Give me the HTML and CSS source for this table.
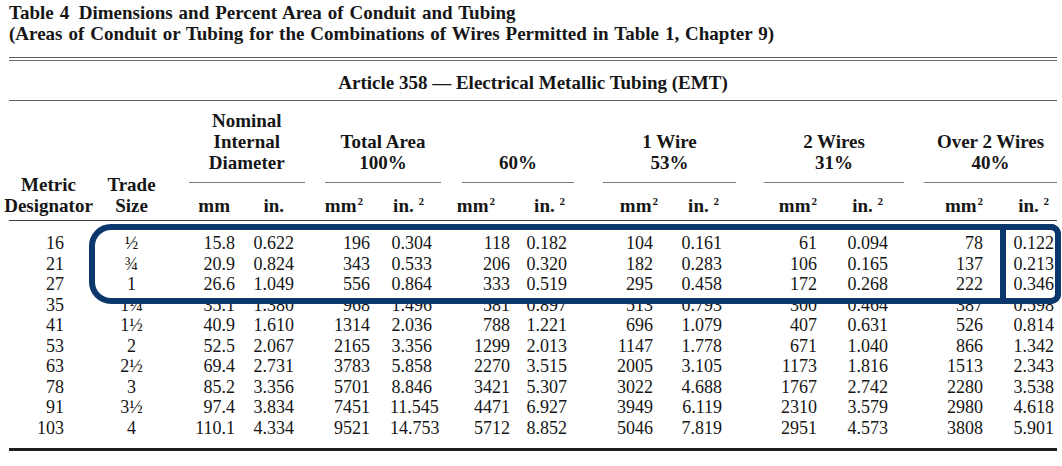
FILE: index.html
```html
<!DOCTYPE html>
<html lang="en">
<head>
<meta charset="utf-8">
<title>Table 4 — Electrical Metallic Tubing</title>
<link rel="stylesheet" href="styles.css">
</head>
<body>
<main class="page">
  <h1 class="title">Table 4&ensp;Dimensions and Percent Area of Conduit and Tubing<br>(Areas of Conduit or Tubing for the Combinations of Wires Permitted in Table 1, Chapter 9)</h1>
  <div class="rule-double"></div>
  <h2 class="article">Article 358 — Electrical Metallic Tubing (EMT)</h2>
  <table class="dims">
    <colgroup>
      <col class="w1"><col class="w2"><col class="w3"><col class="w4"><col class="w5"><col class="w6"><col class="w7">
      <col class="w8"><col class="w9"><col class="w10"><col class="w11"><col class="w12"><col class="w13"><col class="w14">
    </colgroup>
    <thead>
      <tr class="head-groups">
        <th rowspan="2" class="head-key"><div class="key-label">Metric<br>Designator</div></th>
        <th rowspan="2" class="head-key"><div class="key-label">Trade<br>Size</div></th>
        <th colspan="2"><div class="grp">Nominal<br>Internal<br>Diameter</div></th>
        <th colspan="2"><div class="grp">Total Area<br>100%</div></th>
        <th colspan="2"><div class="grp">60%</div></th>
        <th colspan="2"><div class="grp">1 Wire<br>53%</div></th>
        <th colspan="2"><div class="grp">2 Wires<br>31%</div></th>
        <th colspan="2"><div class="grp">Over 2 Wires<br>40%</div></th>
      </tr>
      <tr class="head-units">
        <th>mm</th><th>in.</th>
        <th>mm<sup>2</sup></th><th>in.&#8201;<sup>2</sup></th>
        <th>mm<sup>2</sup></th><th>in.&#8201;<sup>2</sup></th>
        <th>mm<sup>2</sup></th><th>in.&#8201;<sup>2</sup></th>
        <th>mm<sup>2</sup></th><th>in.&#8201;<sup>2</sup></th>
        <th>mm<sup>2</sup></th><th>in.&#8201;<sup>2</sup></th>
      </tr>
    </thead>
    <tbody>
      <tr><td>16</td><td>½</td><td>15.8</td><td>0.622</td><td>196</td><td>0.304</td><td>118</td><td>0.182</td><td>104</td><td>0.161</td><td>61</td><td>0.094</td><td>78</td><td>0.122</td></tr>
      <tr><td>21</td><td>¾</td><td>20.9</td><td>0.824</td><td>343</td><td>0.533</td><td>206</td><td>0.320</td><td>182</td><td>0.283</td><td>106</td><td>0.165</td><td>137</td><td>0.213</td></tr>
      <tr><td>27</td><td>1</td><td>26.6</td><td>1.049</td><td>556</td><td>0.864</td><td>333</td><td>0.519</td><td>295</td><td>0.458</td><td>172</td><td>0.268</td><td>222</td><td>0.346</td></tr>
      <tr><td>35</td><td>1¼</td><td>35.1</td><td>1.380</td><td>968</td><td>1.496</td><td>581</td><td>0.897</td><td>513</td><td>0.793</td><td>300</td><td>0.464</td><td>387</td><td>0.598</td></tr>
      <tr><td>41</td><td>1½</td><td>40.9</td><td>1.610</td><td>1314</td><td>2.036</td><td>788</td><td>1.221</td><td>696</td><td>1.079</td><td>407</td><td>0.631</td><td>526</td><td>0.814</td></tr>
      <tr><td>53</td><td>2</td><td>52.5</td><td>2.067</td><td>2165</td><td>3.356</td><td>1299</td><td>2.013</td><td>1147</td><td>1.778</td><td>671</td><td>1.040</td><td>866</td><td>1.342</td></tr>
      <tr><td>63</td><td>2½</td><td>69.4</td><td>2.731</td><td>3783</td><td>5.858</td><td>2270</td><td>3.515</td><td>2005</td><td>3.105</td><td>1173</td><td>1.816</td><td>1513</td><td>2.343</td></tr>
      <tr><td>78</td><td>3</td><td>85.2</td><td>3.356</td><td>5701</td><td>8.846</td><td>3421</td><td>5.307</td><td>3022</td><td>4.688</td><td>1767</td><td>2.742</td><td>2280</td><td>3.538</td></tr>
      <tr><td>91</td><td>3½</td><td>97.4</td><td>3.834</td><td>7451</td><td>11.545</td><td>4471</td><td>6.927</td><td>3949</td><td>6.119</td><td>2310</td><td>3.579</td><td>2980</td><td>4.618</td></tr>
      <tr><td>103</td><td>4</td><td>110.1</td><td>4.334</td><td>9521</td><td>14.753</td><td>5712</td><td>8.852</td><td>5046</td><td>7.819</td><td>2951</td><td>4.573</td><td>3808</td><td>5.901</td></tr>
    </tbody>
  </table>
  <div class="mark mark-rows" aria-hidden="true"></div>
  <div class="mark mark-col" aria-hidden="true"></div>
</main>
</body>
</html>
```
FILE: styles.css
```css
* { box-sizing: border-box; }
html, body { margin: 0; background: #fff; }
body {
  font-family: "Liberation Serif", "Times New Roman", serif;
  color: #161616;
}
.page {
  position: relative;
  width: 1062px;
  height: 466px;
  padding: 1.5px 5px 0 9px;
  overflow: hidden;
}
.title {
  margin: 0;
  font-size: 19px;
  line-height: 21px;
  font-weight: bold;
  word-spacing: 1.2px;
}
.rule-double {
  margin-top: 13.5px;
  height: 4px;
  border-top: 1.5px solid #5f5f5f;
  border-bottom: 1px solid #6a6a6a;
}
.article {
  margin: 10.5px 0 0;
  padding-bottom: 7.5px;
  border-bottom: 1.5px solid #5f5f5f;
  text-align: center;
  font-size: 19px;
  line-height: 21px;
  font-weight: bold;
}

/* table */
.dims {
  width: 1048px;
  table-layout: fixed;
  border-collapse: separate;
  border-spacing: 0;
  font-size: 18px;
}
.w1 { width: 79px; }
.w2 { width: 87px; }
.w3 { width: 70px; }
.w4 { width: 70px; }
.w5 { width: 75px; }
.w6 { width: 62px; }
.w7 { width: 68px; }
.w8 { width: 70px; }
.w9 { width: 80px; }
.w10 { width: 78px; }
.w11 { width: 87px; }
.w12 { width: 77px; }
.w13 { width: 88px; }
.w14 { width: 57px; }

.dims th, .dims td { padding: 0; }
.dims thead th {
  font-size: 19px;
  font-weight: bold;
  line-height: 21px;
  vertical-align: bottom;
  white-space: nowrap;
}
.head-groups th { padding: 9px 0 10.5px; text-align: center; }
.head-groups .head-key { padding: 0 0 4px; border-bottom: 1.5px solid #3d3d3d; }
.key-label { margin: 0 -8px; text-align: center; }
.grp {
  padding-bottom: 8.5px;
  border-bottom: 1.5px solid #7a7a7a;
  text-align: center;
}
.head-groups th:nth-child(3) .grp { margin: 0 10.5px 0 14px; }
.head-groups th:nth-child(4) .grp { margin: 0 11px 0 10px; }
.head-groups th:nth-child(5) .grp { margin: 0 16px 0 10px; }
.head-groups th:nth-child(6) .grp { margin: 0 12px 0 13px; }
.head-groups th:nth-child(7) .grp { margin: 0 8px 0 16px; }
.head-groups th:nth-child(8) .grp { margin: 0 0 0 12px; }

.head-units th {
  padding-top: 1.5px;
  padding-bottom: 4px;
  text-align: right;
  border-bottom: 1.5px solid #3d3d3d;
}
.head-units th:nth-child(1) { padding-right: 15px; }
.head-units th:nth-child(2) { padding-right: 31px; }
.head-units th:nth-child(3) { padding-right: 27px; }
.head-units th:nth-child(4) { padding-right: 28px; }
.head-units th:nth-child(5) { padding-right: 25px; }
.head-units th:nth-child(6) { padding-right: 25px; }
.head-units th:nth-child(7) { padding-right: 12px; }
.head-units th:nth-child(8) { padding-right: 29px; }
.head-units th:nth-child(9) { padding-right: 18px; }
.head-units th:nth-child(10) { padding-right: 29px; }
.head-units th:nth-child(11) { padding-right: 17px; }
.head-units th:nth-child(12) { padding-right: 8px; }

.dims sup {
  font-size: 11px;
  line-height: 0;
  vertical-align: 7px;
  margin-left: 1px;
}

.dims td {
  line-height: 20.5px;
  text-align: right;
  white-space: nowrap;
}
.dims tbody tr:first-child td { padding-top: 12.75px; }
.dims tbody tr:last-child td {
  padding-bottom: 9.75px;
  border-bottom: 3px solid #1f1f1f;
}
.dims td:nth-child(1) { padding-right: 24px; }
.dims td:nth-child(2) { text-align: center; }
.dims td:nth-child(3) { padding-right: 10px; }
.dims td:nth-child(4) { padding-right: 21px; }
.dims td:nth-child(5) { padding-right: 20px; }
.dims td:nth-child(6) { padding-right: 20px; }
.dims td:nth-child(7) { padding-right: 10px; }
.dims td:nth-child(8) { padding-right: 23px; }
.dims td:nth-child(9) { padding-right: 17px; }
.dims td:nth-child(10) { padding-right: 26px; }
.dims td:nth-child(11) { padding-right: 18px; }
.dims td:nth-child(12) { padding-right: 24px; }
.dims td:nth-child(13) { padding-right: 17px; }
.dims td:nth-child(14) { padding-right: 3px; }

/* highlight overlay */
.mark {
  position: absolute;
  border: 6px solid #0b376c;
  pointer-events: none;
}
.mark-rows {
  left: 89px;
  top: 224px;
  width: 972px;
  height: 80px;
  border-radius: 22px 10px 10px 22px;
}
.mark-col {
  left: 1000px;
  top: 224px;
  width: 61px;
  height: 80px;
  border-radius: 0 10px 10px 0;
}
```
